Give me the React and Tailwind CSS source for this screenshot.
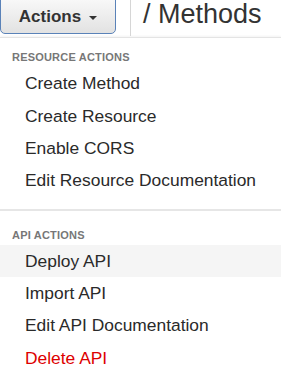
const resourceActions = ['Create Method', 'Create Resource', 'Enable CORS', 'Edit Resource Documentation']

function MenuLabel({ children }) {
  return (
    <div className="h-[14px] pl-[12px] text-[11px] leading-[14px] font-bold tracking-[0.2px] text-[#777]">
      {children}
    </div>
  )
}

function MenuItem({ children, active, danger }) {
  return (
    <div
      className={
        'h-[32.4px] pl-[25px] flex items-center text-[17.4px] ' +
        (active ? 'bg-[#f5f5f5] ' : '') +
        (danger ? 'text-[#dd0000]' : 'text-[#2a2a2a]')
      }
    >
      {children}
    </div>
  )
}

export default function App() {
  return (
    <div className="w-[281px] h-[382px] bg-white overflow-hidden font-['Liberation_Sans',Arial,sans-serif]">
      <div className="h-[37px] flex items-start">
        <button className="mt-[-12px] h-[46px] w-[116px] shrink-0 border border-[#5a82b8] rounded-b-[5px] bg-gradient-to-b from-white to-[#e2e2e2] flex items-center justify-center gap-[8px] pt-[12px] text-[17px] font-bold text-[#333]">
          <span>Actions</span>
          <span className="w-0 h-0 border-l-[4px] border-r-[4px] border-t-[4px] border-l-transparent border-r-transparent border-t-[#333] mt-[2px]" />
        </button>
        <div className="ml-[14px] w-px h-[36px] bg-[#d6d6d6]" />
        <div className="ml-[12px] text-[27px] leading-[30px] text-[#333] mt-[-1px]">/ Methods</div>
      </div>
      <div className="border-t border-[#e4e4e4] shadow-[0_-1px_2px_rgba(0,0,0,0.05)] pt-[12px]">
        <MenuLabel>RESOURCE ACTIONS</MenuLabel>
        <div className="mt-[3px]">
          {resourceActions.map((a) => (
            <MenuItem key={a}>{a}</MenuItem>
          ))}
        </div>
        <div className="mt-[12px] h-[2px] bg-[#e6e6e6]" />
        <div className="pt-[17px]">
          <MenuLabel>API ACTIONS</MenuLabel>
        </div>
        <div className="mt-[3px]">
          <MenuItem active>Deploy API</MenuItem>
          <MenuItem>Import API</MenuItem>
          <MenuItem>Edit API Documentation</MenuItem>
          <MenuItem danger>Delete API</MenuItem>
        </div>
      </div>
    </div>
  )
}
